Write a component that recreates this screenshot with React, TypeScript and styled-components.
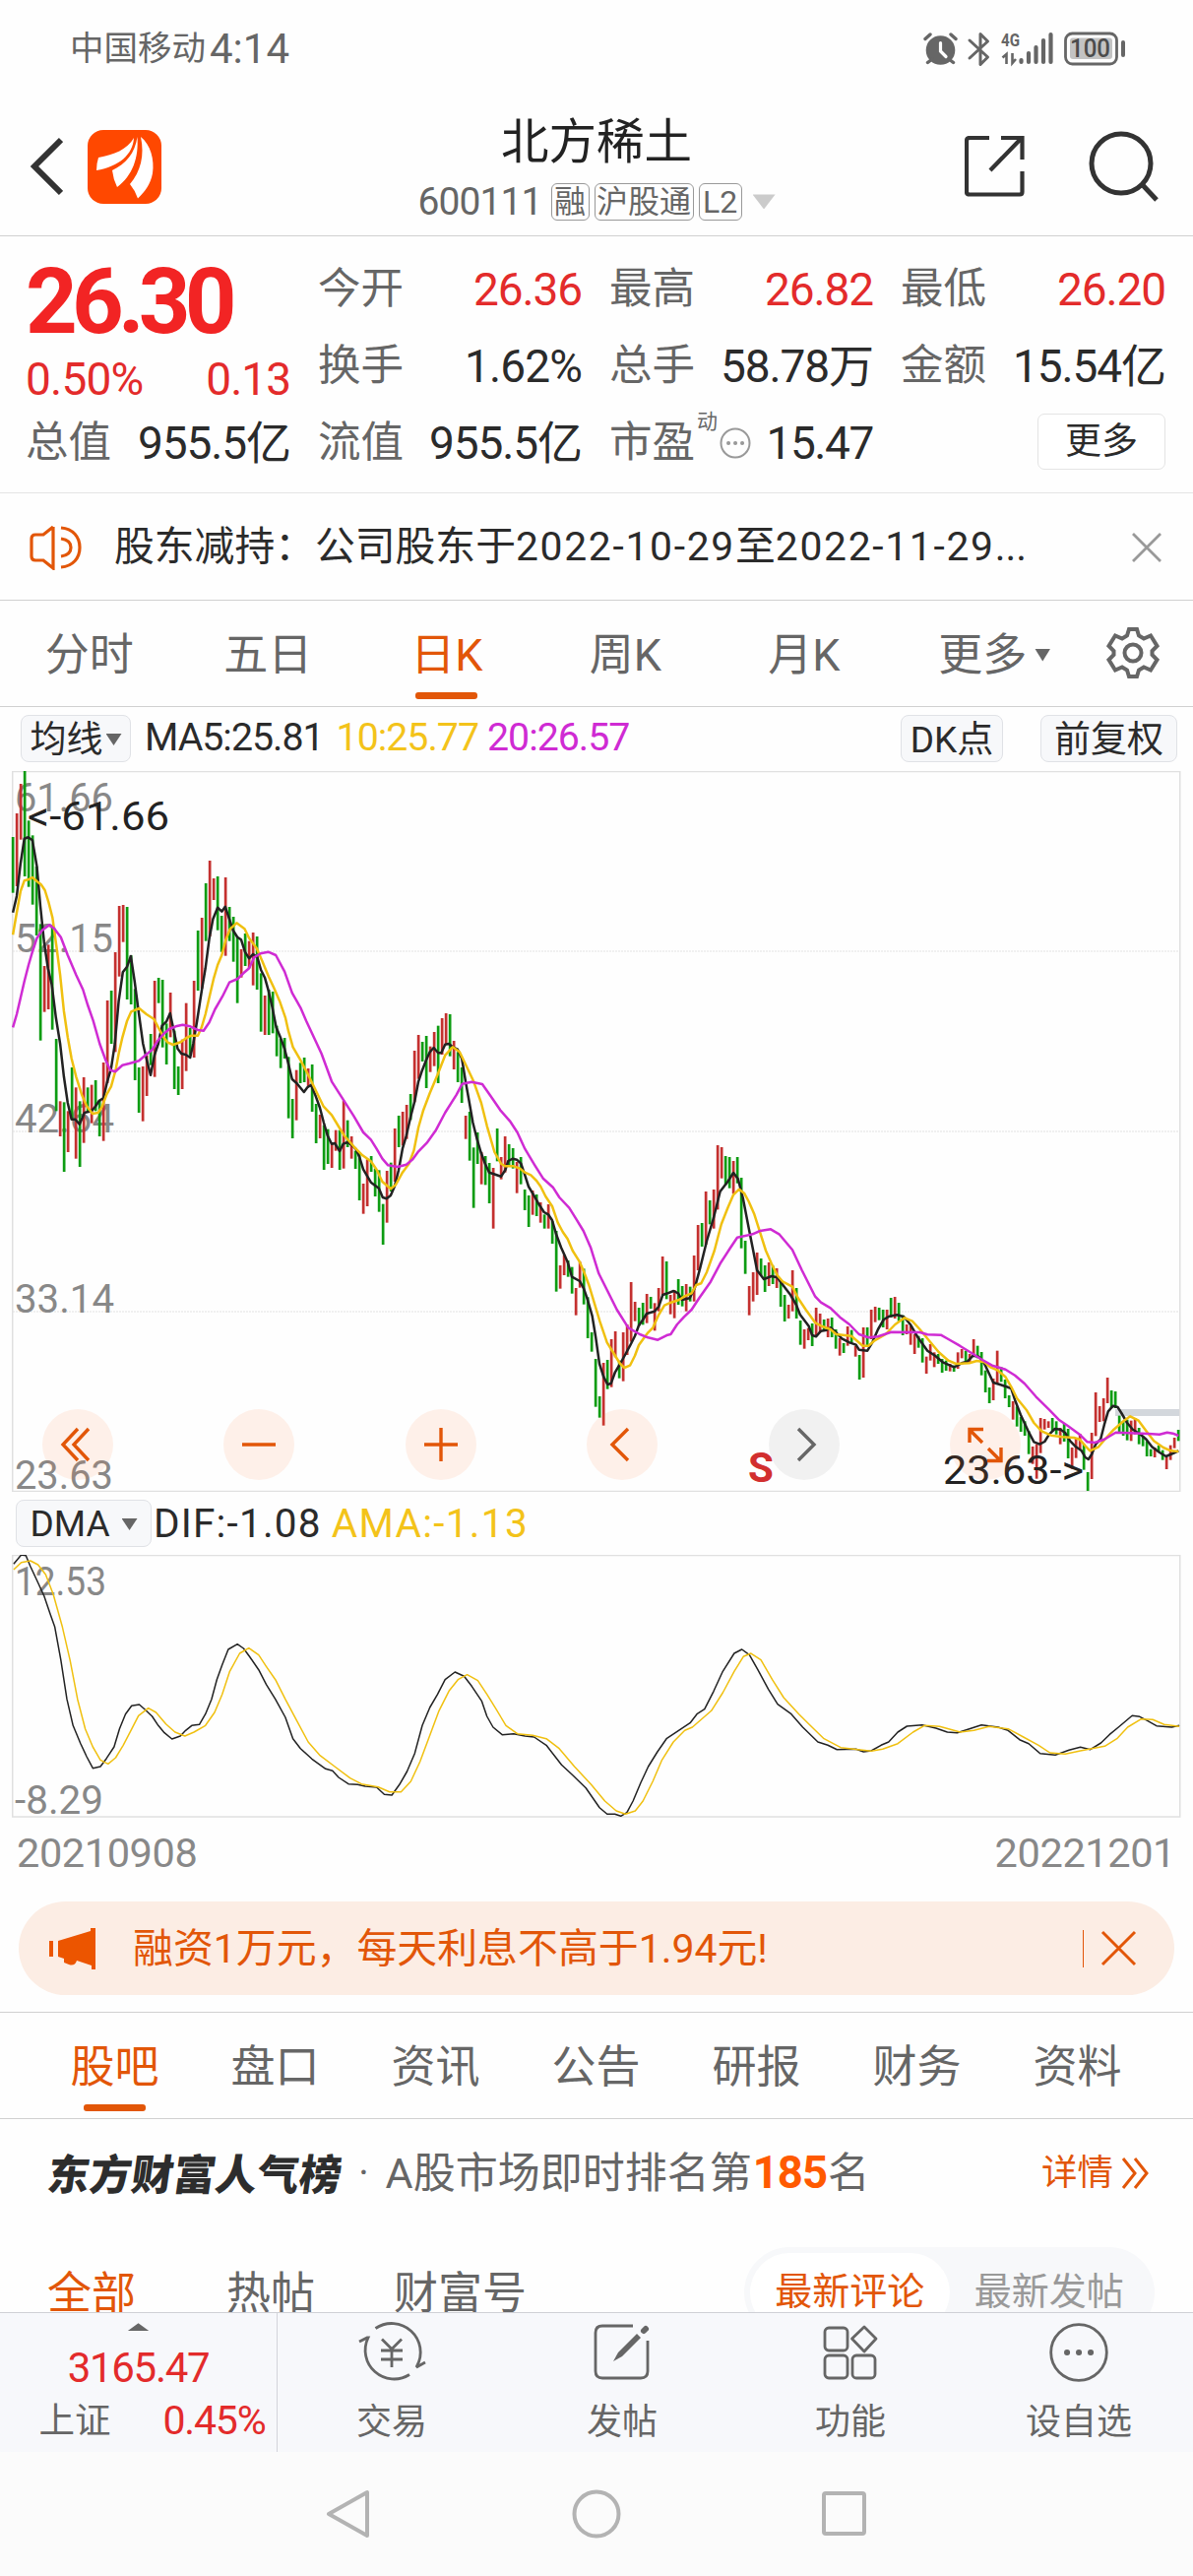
import React from "react";
import styled, { createGlobalStyle } from "styled-components";

const ORANGE = "#e25608";
const GRAY = "#666";
const DARK = "#2b2b2b";
const RED = "#e32b2b";
const FONT = 'Roboto, "Noto Sans CJK SC", sans-serif';

const GlobalStyle = createGlobalStyle`
  *, *::before, *::after { box-sizing: border-box; }
  body { margin: 0; background: #fff; font-family: ${FONT}; }
  svg { display: block; flex: none; }
`;

const Screen = styled.div`
  width: 1212px;
  height: 2616px;
  display: flex;
  flex-direction: column;
  overflow: hidden;
  background: #fefefe;
  white-space: nowrap;
  line-height: 1;
`;

/* ---------- generic text ---------- */
const Txt = styled.span<{ $s: number; $c?: string; $ls?: number; $w?: number; $ml?: number }>`
  font-size: ${(p) => p.$s}px;
  color: ${(p) => p.$c ?? GRAY};
  letter-spacing: ${(p) => p.$ls ?? 0}px;
  font-weight: ${(p) => p.$w ?? 400};
  margin-left: ${(p) => p.$ml ?? 0}px;
  line-height: 1.1;
`;

/* ---------- status bar ---------- */
const StatusBar = styled.div`
  height: 100px;
  padding: 0 68px 0 71px;
  display: flex;
  align-items: center;
  justify-content: space-between;
`;
const StatusGroup = styled.div`
  display: flex;
  align-items: center;
`;

/* ---------- header ---------- */
const Header = styled.div`
  height: 140px;
  border-bottom: 1px solid #d0d0d0;
  display: grid;
  grid-template-columns: 1fr auto 1fr;
  padding: 0 34px 0 30px;
`;
const HeaderSide = styled.div<{ $end?: boolean }>`
  display: flex;
  align-items: center;
  justify-content: ${(p) => (p.$end ? "flex-end" : "flex-start")};
  gap: ${(p) => (p.$end ? 64 : 25)}px;
`;
const TitleBlock = styled.div`
  display: flex;
  flex-direction: column;
  align-items: center;
  padding: 17px 0 0 4px;
`;
const TitleText = styled.h1`
  margin: 0;
  font-weight: 400;
  font-size: 48.5px;
  line-height: 56px;
  color: #222;
`;
const SubTitle = styled.div`
  display: flex;
  align-items: center;
  height: 38px;
  margin-top: 13px;
`;
const Tag = styled.span<{ $w: number; $ml: number }>`
  width: ${(p) => p.$w}px;
  height: 38px;
  margin-left: ${(p) => p.$ml}px;
  border: 1.5px solid #999;
  border-radius: 6px;
  font-size: 32px;
  line-height: 37px;
  display: flex;
  justify-content: center;
  color: ${GRAY};
`;
const Caret = styled.i<{ $w: number; $h: number; $c: string; $ml?: number; $up?: boolean }>`
  width: ${(p) => p.$w}px;
  height: ${(p) => p.$h}px;
  flex: none;
  margin-left: ${(p) => p.$ml ?? 0}px;
  background: ${(p) => p.$c};
  clip-path: ${(p) => (p.$up ? "polygon(50% 0, 100% 100%, 0 100%)" : "polygon(0 0, 100% 0, 50% 100%)")};
`;

/* ---------- quote ---------- */
const Quote = styled.div`
  height: 261px;
  padding: 15px 26px 0 26px;
  border-bottom: 1px solid #e4e4e4;
  display: grid;
  grid-template-columns: 269px 268px 268px 269px;
  column-gap: 28px;
  grid-auto-rows: 78.2px;
`;
const PriceCell = styled.div`
  grid-row: span 2;
  display: flex;
  flex-direction: column;
`;
const BigPrice = styled.div`
  height: 105px;
  line-height: 104px;
  font-size: 92px;
  font-weight: 700;
  letter-spacing: -5.8px;
  color: #f22424;
`;
const Cell = styled.div<{ $h?: number }>`
  height: ${(p) => p.$h ?? 78.2}px;
  display: flex;
  align-items: center;
  justify-content: space-between;
`;
const PeLabel = styled.span`
  display: flex;
  align-items: center;
`;
const Sup = styled.span`
  align-self: flex-start;
  margin: -8px 2px 0 2px;
  font-size: 21px;
  color: ${GRAY};
`;
const MoreButton = styled.button`
  width: 130px;
  height: 57px;
  margin: -3px 0 0 auto;
  padding: 0;
  border: 1.5px solid #e4e4e4;
  border-radius: 7px;
  background: #fff;
  font: 400 37px/51px ${FONT};
  color: ${DARK};
`;

/* ---------- notice ---------- */
const Notice = styled.div`
  height: 109px;
  padding: 2px 31px 0 30px;
  border-bottom: 1px solid #d0d0d0;
  display: flex;
  align-items: center;
`;
const NoticeText = styled.div`
  flex: 1;
  margin-left: 33px;
  font-size: 40.8px;
  color: ${DARK};
  line-height: 1.1;
`;
const DateRun = styled.span`
  letter-spacing: 1.7px;
`;

/* ---------- tab bars ---------- */
const TabBar = styled.div<{ $pl: number; $pr: number }>`
  height: 108px;
  padding: 0 ${(p) => p.$pr}px 0 ${(p) => p.$pl}px;
  border-bottom: 1px solid #d0d0d0;
  display: flex;
  align-items: stretch;
`;
const Tab = styled.div<{ $on?: boolean }>`
  flex: 1;
  position: relative;
  display: flex;
  align-items: center;
  justify-content: center;
  padding-top: 4px;
  font-size: 45px;
  color: ${(p) => (p.$on ? ORANGE : GRAY)};
  &::after {
    content: "";
    display: ${(p) => (p.$on ? "block" : "none")};
    position: absolute;
    bottom: 7px;
    left: 50%;
    width: 63px;
    height: 7px;
    margin-left: -31.5px;
    border-radius: 3px;
    background: ${ORANGE};
  }
`;
const GearSlot = styled.div`
  width: 123px;
  display: flex;
  align-items: center;
  justify-content: center;
`;

/* ---------- chart ---------- */
const LegendRow = styled.div<{ $pl: number }>`
  height: 65px;
  padding: 0 16px 0 ${(p) => p.$pl}px;
  display: flex;
  align-items: center;
`;
const Chip = styled.div<{ $w: number; $ml?: string }>`
  width: ${(p) => p.$w}px;
  height: 48px;
  margin-left: ${(p) => p.$ml ?? "0"};
  padding-top: 2px;
  border: 1.5px solid #e0e2e6;
  border-radius: 8px;
  background: #f7f8fa;
  display: flex;
  align-items: center;
  justify-content: center;
  font-size: 37px;
  color: ${DARK};
`;
const ChartBox = styled.div<{ $h: number }>`
  position: relative;
  height: ${(p) => p.$h}px;
`;
const ChartControls = styled.div`
  position: absolute;
  left: 43px;
  right: 175px;
  bottom: 12px;
  display: flex;
  justify-content: space-between;
`;
const RoundButton = styled.div<{ $gray?: boolean }>`
  width: 72px;
  height: 72px;
  border-radius: 50%;
  background: ${(p) => (p.$gray ? "rgba(0,0,0,.05)" : "rgba(255,115,45,.1)")};
`;
const DateRow = styled.div`
  height: 68px;
  padding: 2px 18px 0 17px;
  display: flex;
  align-items: center;
  justify-content: space-between;
`;

/* ---------- banner ---------- */
const BannerWrap = styled.div`
  height: 130px;
  padding: 17px 19px 0 19px;
  border-bottom: 1px solid #d0d0d0;
`;
const Banner = styled.div`
  height: 95px;
  border-radius: 48px;
  background: #fcede4;
  padding: 0 38px 0 31px;
  display: flex;
  align-items: center;
`;
const BannerText = styled.div`
  flex: 1;
  margin-left: 37px;
  padding-top: 2px;
  font-size: 40.9px;
  color: ${ORANGE};
`;
const Rule = styled.i`
  width: 1px;
  height: 38px;
  margin-right: 17px;
  background: ${ORANGE};
`;

/* ---------- rank and comments ---------- */
const RankRow = styled.div`
  height: 110px;
  padding: 0 41px 0 49px;
  display: flex;
  align-items: center;
`;
const RankLogo = styled.span`
  font-size: 42.6px;
  font-weight: 900;
  line-height: 50px;
  padding-top: 4px;
  transform: skewX(-8deg);
  color: #2d2d2d;
`;
const Spacer = styled.div`
  flex: 1;
`;
const CommentRow = styled.div`
  height: 86px;
  overflow: hidden;
  padding: 20px 39px 0 48px;
  display: flex;
  align-items: flex-start;
`;
const Filter = styled.div<{ $on?: boolean; $mr: number }>`
  margin: 22px ${(p) => p.$mr}px 0 0;
  font-size: 45px;
  line-height: 52px;
  color: ${(p) => (p.$on ? ORANGE : GRAY)};
`;
const Segment = styled.div`
  width: 417px;
  height: 92px;
  margin-left: auto;
  padding: 6px;
  border-radius: 46px;
  background: #f7f8fa;
  display: flex;
`;
const SegmentItem = styled.div<{ $on?: boolean }>`
  flex: 1;
  height: 80px;
  border-radius: 40px;
  background: ${(p) => (p.$on ? "#fff" : "transparent")};
  color: ${(p) => (p.$on ? ORANGE : "#999")};
  font-size: 38px;
  line-height: 78px;
  text-align: center;
`;

/* ---------- bottom ---------- */
const BottomBar = styled.div`
  height: 142px;
  border-top: 1px solid #cfd0d6;
  background: #f7f8fb;
  display: flex;
`;
const IndexBox = styled.div`
  width: 282px;
  border-right: 1px solid #d3d4da;
  display: flex;
  flex-direction: column;
  align-items: center;
  padding-top: 10px;
`;
const IndexValue = styled.div`
  margin-top: 15px;
  font-size: 42px;
  line-height: 46px;
  letter-spacing: -1.3px;
  color: ${RED};
`;
const IndexLine = styled.div`
  width: 230px;
  margin-top: 8px;
  margin-left: 28px;
  display: flex;
  align-items: center;
  justify-content: space-between;
`;
const Action = styled.div`
  flex: 1;
  display: flex;
  flex-direction: column;
  align-items: center;
  padding-top: 8px;
  font-size: 36px;
  color: ${GRAY};
  &:nth-child(2) { padding-right: 2px; }
`;
const ActionLabel = styled.span`
  margin-top: 18px;
  line-height: 42px;
`;
const SystemNav = styled.div`
  height: 126px;
  background: #fbfbfb;
  display: flex;
  justify-content: center;
  align-items: center;
  gap: 202px;
`;

/* ---------- chart data: high and low per session, 3 units per pixel ---------- */
const SESSIONS: { base: number; bars: string }[] = [
  {
    base: 770,
    bars:
      "g240-410 r168-390 r78-248 g38-360 g190-392 g235-446 g330-540 g505-860 r633-773 r568-765 g515-827 g855-1075 r1045-1152 g1048-1260 r1075-1200 g942-1100 r1003-1220 g1045-1245 r972-1172 g1003-1080 r995-1112 g981-1075 g1040-1152 r927-1166 r738-990 g708-870 r591-895 r450-665 r447-560 g453-735 g600-750 g703-981 g942-1080 r939-1106 r905-1029 g840-935 r678-971 g669-746 g675-881 g808-933 r714-850 g830-1008 g939-1026 r857-1008 r746-953 g822-905 r678-912 g525-708 r486-702 g381-557 r312-543 r366-432 g360-524 g480-590 r363-602 g453-557 g483-620 g545-746 r582-668 g534-633 r557-640 r531-692 g543-705 g655-833 r723-843 g705-843 g711-838 g815-908 g855-944 g852-915 g910-1097 g1038-1158 r950-1103 g928-990 g912-987 r945-1000 g933-1077 g1053-1173 r1086-1158 g1118-1254 g1130-1236 r1173-1248 r1133-1196 g1133-1254 r1043-1250 g1103-1185 r1152-1220 g1196-1251 g1200-1347 r1296-1388 r1222-1365 g1212-1260 g1250-1335 g1255-1382 g1358-1482 r1257-1415 g1232-1320 r1128-1290 g1089-1185 r1077-1180 r1056-1160 g1023-1102 r891-1048 r843-977 g864-924 g846-1005 r878-956 r834-938 g815-990 r792-903 r777-870 g780-908 r861-948 g895-987 g942-1050 r1089-1160 g1077-1226 g1186-1370 g1140-1236 r1200-1298 g1212-1300 g1233-1356",
  },
  {
    base: 1020,
    bars:
      "r498-683 g378-478 r465-533 r402-512 g426-490 g438-500 r480-575 g465-548 g564-627 g582-678 r567-641 g579-645 r603-665 g640-683 r609-683 g660-729 g690-875 r795-866 r763-825 g780-830 g800-881 r864-947 r784-863 g805-914 g892-1017 g999-1058 g1080-1226 g1194-1259 r1092-1283 g1083-1172 r1020-1166 r996-1075 g1085-1139 r999-1148 r975-1068 r846-1028 r906-965 g924-980 g909-976 r882-971 g891-927 r910-994 r864-935 r768-885 g783-898 r885-944 r870-956 g837-915 g858-920",
  },
  {
    base: 1100,
    bars:
      "r612-695 g620-665 r525-665 r432-570 g426-498 r330-492 g357-430 r324-443 r189-385 r195-290 g222-310 g225-320 r237-337 g225-305 g288-503 g480-581 r618-707 r576-665 r516-645 g534-585 g555-636 r546-618 g556-612 r564-624 g600-681 g645-726 r675-717 r570-695 g624-717 g723-797 r750-809 r746-783 g732-801 r684-770 r702-760 g720-755 r717-774 g714-774 g750-809 r777-830 g792-822 r741-800 g752-790 r800-833 g828-903 r744-897 g744-800 r690-780 r681-728 g684-722 g690-744 r690-750 g654-714 r651-717 g669-725 g707-768 r735-765 r740-797 r765-825 g770-806 g777-851 r833-885 r795-845 r820-865 g825-855 g840-882 g845-876 r855-878 g860-879 r820-870 r810-838 g815-850 r825-855 r780-830 g800-838 g819-890 g875-942 g927-975 r900-966 r815-915 g865-910 g903-960 g951-987 r969-1025 g985-1046 g1017-1062 g1030-1074 g1060-1130 r1107-1160 r1100-1205 r1020-1127 r1023-1055 r1030-1050 g1020-1060 g1030-1070 r1050-1100 g1038-1092 g1053-1143 r1110-1175 r1080-1142 r1068-1115 g1100-1178 g1185-1242 r1065-1206 r942-1075 r984-1032 r960-1030 r897-975 g936-990 g939-990 g1013-1063 g1030-1074 g1025-1088 r1028-1090 r1020-1070 g1050-1100 g1075-1106 g1090-1137 g1115-1137 r1110-1140 g1104-1125 g1118-1148 r1140-1176 r1103-1148 r1080-1112 g1056-1090",
  },
];

type Run = { x0: number; y0: number; kx: number; pts: string };
const K = 2.5875;

const MA5: Run[] = [
  { x0: 0, y0: 770, kx: K, pts: "34,470 44,420 54,320 64,245 74,241 85,250 97,330 106,450 116,560 126,640 136,690 147,790 158,870 168,970 178,1050 188,1100 198,1100 209,1115 222,1080 240,1075 250,1062 260,1045 272,1035 282,985 292,945 302,870 312,740 323,652 334,635 344,603 354,680 364,770 376,870 386,920 396,965 406,905 416,870 426,815 437,803 447,777 457,830 467,885 477,900 488,903 500,912 508,870 518,800 530,710 540,640 550,550 560,490 572,455 583,467 592,452 603,490 613,525 624,545 634,553 644,590 655,610 665,597 676,605 686,645 696,668 706,710 716,760 726,820 737,850 748,885 758,930 768,978 780,990 799,1017 808,1003 818,995 830,1030 841,1065 851,1110 861,1150 872,1175 880,1173 893,1197 902,1175 914,1170 924,1178 935,1190 945,1215 955,1253 975,1292 996,1310 1006,1338 1016,1342 1027,1332 1037,1305 1048,1255 1058,1190 1068,1150 1080,1090 1090,1045 1100,985 1110,950 1120,920 1130,895 1140,882 1152,898 1160,898 1170,872 1180,870 1190,880 1203,887 1214,915 1224,985 1234,1050 1243,1110 1254,1160 1264,1200 1275,1235" },
  { x0: 400, y0: 1020, kx: 3, pts: "291,512 305,517 327,524 340,505 349,477 363,470 375,473 388,485 398,515 411,555 423,575 440,605 458,633 471,640 483,658 495,700 510,740 530,785 543,830 567,843 579,865 591,900 605,950 615,1010 627,1095 640,1135 652,1158 662,1155 675,1120 690,1095 705,1068 720,1040 735,1010 747,978 760,960 771,942 795,935 808,920 820,885 835,880 853,873 867,880 874,893" },
  { x0: 606, y0: 1100, kx: K, pts: "225,660 245,655 258,625 272,565 290,480 308,410 325,330 345,300 360,273 372,292 385,350 400,440 412,510 422,570 440,597 460,588 475,592 490,615 510,645 525,675 535,705 558,740 567,768 577,772 590,755 605,752 615,745 630,760 645,778 665,790 682,797 690,812 712,815 725,790 740,750 755,720 770,710 790,706 808,712 825,735 845,775 870,815 890,830 910,850 940,865 960,853 975,848 990,830 1005,833 1020,855 1043,912 1060,918 1078,925 1090,930 1100,965 1115,1010 1135,1060 1150,1093 1165,1100 1178,1092 1190,1070 1205,1053 1220,1055 1232,1065 1245,1090 1260,1108 1275,1120 1285,1140 1293,1146 1302,1130 1312,1100 1325,1085 1335,1040 1345,1000 1358,983 1370,987 1380,1005 1395,1035 1410,1055 1430,1070 1445,1085 1460,1108 1480,1125 1497,1137 1515,1128 1530,1120" },
];
const MA10: Run[] = [
  { x0: 0, y0: 770, kx: K, pts: "34,538 44,470 54,405 64,373 74,370 85,363 97,375 108,385 118,402 128,440 138,485 148,570 158,660 168,770 178,850 188,915 200,970 215,1025 228,1060 243,1083 258,1080 268,1062 280,1025 292,1000 304,950 312,900 322,850 334,800 345,772 366,762 385,780 405,795 416,820 430,850 440,865 455,873 475,865 490,852 503,845 520,845 530,820 540,780 552,720 562,670 572,630 583,600 593,555 605,520 622,502 643,520 655,548 675,580 690,620 706,665 720,700 735,740 750,790 758,830 770,880 790,920 808,960 825,1000 850,1060 872,1087 890,1122 905,1150 930,1183 953,1210 975,1228 990,1253 1005,1290 1027,1312 1040,1300 1058,1262 1075,1235 1088,1195 1100,1125 1112,1075 1130,1020 1150,965 1170,905 1190,880 1208,895 1225,935 1245,985 1265,1050 1280,1120 1300,1200" },
  { x0: 400, y0: 1020, kx: 3, pts: "327,485 339,493 365,493 385,500 400,512 418,520 435,537 448,555 463,585 483,615 500,665 515,693 530,715 545,750 567,785 580,815 595,855 610,905 628,965 650,1030 670,1062 690,1095 703,1107 720,1100 735,1070 747,1038 760,1020 775,1000 790,985 808,945 825,917 845,908 870,900" },
  { x0: 606, y0: 1100, kx: K, pts: "230,650 250,640 262,615 275,610 290,575 310,510 328,430 345,380 360,340 375,323 388,335 400,360 415,400 430,455 445,510 460,550 475,585 490,605 515,620 530,655 550,690 575,730 595,742 615,750 630,765 670,770 685,785 700,800 715,800 730,785 760,765 785,735 810,715 830,725 850,750 875,785 900,820 925,845 945,855 980,853 1000,846 1020,850 1035,865 1055,875 1075,895 1090,925 1105,960 1130,995 1150,1035 1170,1060 1195,1073 1225,1078 1255,1080 1270,1085 1285,1105 1297,1120 1320,1108 1340,1080 1360,1055 1385,1030 1403,1015 1425,1028 1445,1060 1465,1090 1490,1110 1510,1120 1530,1122" },
];
const MA20: Run[] = [
  { x0: 0, y0: 770, kx: K, pts: "34,820 44,780 54,730 64,680 75,630 85,590 97,548 110,525 130,508 143,520 160,545 178,600 200,660 218,705 230,750 245,800 262,870 278,920 290,950 303,955 322,935 340,930 365,922 382,905 400,888 415,860 430,840 445,825 462,817 480,812 500,817 520,828 535,830 550,805 565,765 585,725 603,683 625,672 640,655 655,640 668,607 685,595 705,590 725,600 748,650 768,715 790,760 805,800 825,850 845,900 872,985 905,1045 930,1090 955,1140 975,1162 990,1190 1005,1220 1020,1240 1045,1245 1068,1238 1085,1222 1100,1198 1122,1172 1145,1135 1170,1080 1200,1025 1215,992 1240,986 1268,993 1290,1030 1315,1072 1340,1105 1360,1140 1380,1190" },
  { x0: 400, y0: 1020, kx: 3, pts: "412,460 430,490 455,530 485,557 505,588 535,620 555,652 578,690 600,740 625,820 650,870 680,930 715,985 750,1005 775,1015 805,1022 835,1007" },
  { x0: 606, y0: 1100, kx: K, pts: "195,765 212,735 230,712 250,690 270,655 300,605 325,550 350,505 370,470 410,460 430,450 458,445 480,460 515,508 540,570 575,650 590,668 615,685 640,713 665,735 690,765 715,775 740,772 775,758 850,759 870,766 905,767 925,780 955,800 990,825 1010,840 1040,860 1075,872 1100,890 1125,915 1155,955 1190,995 1215,1025 1240,1045 1270,1070 1290,1093 1310,1095 1335,1085 1365,1064 1400,1066 1450,1068 1480,1070 1500,1064 1515,1067 1530,1074" },
];
const DIF: Run[] = [
  { x0: 0, y0: 1540, kx: 1.2937, pts: "18,148 28,120 34,122 40,155 48,195 58,245 66,300 72,340 80,440 88,560 96,640 106,695 114,735 122,770 132,765 140,740 150,705 157,650 165,605 173,580 183,576 190,590 200,612 208,640 216,662 226,681 237,672 244,655 252,640 262,637 270,605 278,560 285,500 292,455 300,408 312,392 320,405 328,430 340,470 350,515 362,560 375,615 385,680 395,710 410,742 428,772 437,778 445,798 458,818 470,820 480,825 495,828 505,850 515,852 525,820 535,780 545,725 555,640 565,585 575,545 585,500 598,477 610,490 620,520 633,565 640,612 648,645 660,668 675,665 690,672 702,675 718,700 738,760 752,790 770,830 788,890 798,910 808,910 816,916 824,905 832,870 842,815 852,765 864,720 876,680 892,655 907,632 916,605 926,590 938,535 950,475 965,420 975,408 985,425 996,470 1010,530 1022,575 1040,605 1055,645 1075,690 1088,700 1100,713 1125,712 1135,720 1145,717 1158,700 1168,690 1180,660 1192,642 1212,638 1230,648 1245,660 1258,662 1270,653 1290,638 1312,645 1325,655 1340,683 1352,695 1367,725 1387,730 1405,715 1420,706 1433,713 1447,693 1458,668 1470,645 1488,610 1498,613 1508,625 1520,641 1540,645 1550,640" },
];
const AMA: Run[] = [
  { x0: 0, y0: 1540, kx: 1.2937, pts: "18,165 28,143 40,138 50,150 60,180 70,240 82,340 92,440 102,560 112,650 122,705 132,745 142,757 152,738 162,700 172,655 182,610 195,587 205,600 218,635 230,660 243,672 255,660 270,640 282,600 292,545 302,475 315,420 327,404 340,425 350,460 362,500 375,560 390,625 405,690 420,730 440,765 460,800 475,818 497,827 512,842 527,842 540,810 552,750 565,670 577,595 590,535 602,500 614,485 628,503 640,545 652,590 665,640 680,665 700,670 718,680 735,710 755,765 777,820 795,870 810,900 822,910 835,900 845,870 858,810 870,745 885,690 900,655 910,645 935,595 950,540 965,475 977,430 987,420 1000,440 1015,500 1030,555 1050,605 1065,640 1083,680 1105,707 1145,718 1160,712 1180,695 1200,660 1215,640 1235,643 1262,660 1280,655 1300,643 1325,650 1345,675 1365,700 1380,723 1400,727 1420,717 1435,710 1452,703 1468,680 1482,645 1500,620 1515,622 1530,637 1550,643" },
];

const toPoints = (runs: Run[]) =>
  runs
    .flatMap((r) =>
      r.pts.split(" ").map((p) => {
        const [x, y] = p.split(",").map(Number);
        return `${(r.x0 + x / r.kx).toFixed(1)},${(r.y0 + y / 3).toFixed(1)}`;
      })
    )
    .join(" ");

const CANDLES = SESSIONS.flatMap(({ base, bars }) =>
  bars.split(" ").map((b) => {
    const [hi, lo] = b.slice(1).split("-").map(Number);
    return { up: b[0] === "r", hi: base + hi / 3, lo: base + lo / 3 };
  })
);

const AxisText = ({ x, y, w, fill = "#888", children }: { x: number; y: number; w: number; fill?: string; children: string }) => (
  <text x={x} y={y} textLength={w} lengthAdjust="spacingAndGlyphs" fontSize="41.5" fill={fill} fontFamily="Roboto">
    {children}
  </text>
);

const Trend = ({ runs, color, w }: { runs: Run[]; color: string; w: number }) => (
  <polyline points={toPoints(runs)} fill="none" stroke={color} strokeWidth={w} strokeLinejoin="round" />
);

const CandleChart = () => (
  <svg width="1212" height="732" viewBox="0 783 1212 732">
    <g stroke="#ececec" strokeWidth="1.6" strokeDasharray="2 1">
      <path d="M13 966H1198M13 1149H1198M13 1332H1198" />
    </g>
    <rect x="1133" y="1431" width="66" height="7" fill="#d3d7dc" />
    <rect x="12.75" y="783.500" width="1186" height="731" fill="none" stroke="#e0e0e0" strokeWidth="1.5" />
    <AxisText x={15} y={824} w={100}>61.66</AxisText>
    <AxisText x={15} y={967} w={100}>52.15</AxisText>
    <AxisText x={15} y={1150} w={101}>42.64</AxisText>
    <AxisText x={15} y={1333} w={101}>33.14</AxisText>
    <AxisText x={15} y={1512} w={100}>23.63</AxisText>
    {CANDLES.map((c, i) => (
      <rect key={i} x={11.8 + i * 4} y={c.hi} width={2.7} height={c.lo - c.hi} fill={c.up ? "#c4302f" : "#0d9c12"} />
    ))}
    <Trend runs={MA5} color="#222" w={2.5} />
    <Trend runs={MA10} color="#f0c010" w={2.5} />
    <Trend runs={MA20} color="#cf2bd3" w={2.5} />
    <AxisText x={28} y={843} w={144} fill="#222">&lt;-61.66</AxisText>
    <AxisText x={958} y={1507} w={143} fill="#222">23.63-&gt;</AxisText>
    <text x="760" y="1505" fontSize="42" fontWeight="700" fontFamily="Roboto" fill="#d22f2f">S</text>
  </svg>
);

const DmaChart = () => (
  <svg width="1212" height="267" viewBox="0 1580 1212 267">
    <rect x="12.75" y="1580.500" width="1186" height="265.500" fill="none" stroke="#e0e0e0" strokeWidth="1.5" />
    <AxisText x={15} y={1621} w={93}>12.53</AxisText>
    <AxisText x={15} y={1843} w={90}>-8.29</AxisText>
    <Trend runs={DIF} color="#222" w={1.5} />
    <Trend runs={AMA} color="#f0c010" w={1.5} />
  </svg>
);

const CONTROLS = [
  { d: "M36 20L21 36L36 52M47 20L32 36L47 52" },
  { d: "M19 36H53" },
  { d: "M19 36H53M36 19V53" },
  { d: "M42 20L26 36L42 52" },
  { d: "M30 20L46 36L30 52", gray: true },
  { d: "M33 34L20 21M20 34V20.500H34M39 40L52 53M52 39V52.500H38" },
];

/* ---------- icons ---------- */
const Line = styled.svg<{ $c?: string; $w?: number }>`
  fill: none;
  stroke: ${(p) => p.$c ?? GRAY};
  stroke-width: ${(p) => p.$w ?? 2.6};
`;

const StatusIcons = () => (
  <svg width="206" height="38" viewBox="938 31 206 38" fill="none" stroke="#666">
    <circle cx="955.500" cy="51" r="14.800" fill="#666" stroke="none" />
    <path d="M955.500 43.500V52L961 57.500" stroke="#fff" strokeWidth="3.200" strokeLinecap="round" />
    <path d="M940 39.500L945 35M971 39.500L966 35M942.500 63.500L947 60M968.500 63.500L964 60" strokeWidth="3.400" strokeLinecap="round" />
    <path d="M985 41L1003.500 58L996 65.500V34.500L1003.500 42L985 59" strokeWidth="3" strokeLinecap="round" strokeLinejoin="round" />
    <text x="1017" y="46.500" fontSize="19" fontWeight="700" fontFamily="Roboto" fill="#666" stroke="none" textLength="19" lengthAdjust="spacingAndGlyphs">4G</text>
    <path d="M1018.500 58.500L1022.500 55V65M1028.500 54V64L1032 60" strokeWidth="2.600" />
    <path d="M1037.500 61V63M1045 54V63M1052.500 48V63M1060 41V63M1067.500 35V63" strokeWidth="4.200" strokeLinecap="round" />
    <rect x="1082.500" y="34" width="52" height="31" rx="7" strokeWidth="2.800" />
    <rect x="1087" y="38.500" width="43" height="21.500" rx="3" fill="#c3c3c3" stroke="none" />
    <text x="1087" y="58" fontSize="25.500" fontWeight="500" fontFamily="Roboto" fill="#4c4c4c" stroke="none" textLength="41" lengthAdjust="spacingAndGlyphs">100</text>
    <path d="M1141 43V56" strokeWidth="4" strokeLinecap="round" />
  </svg>
);

const BrandLogo = () => (
  <svg width="75" height="75" viewBox="0 0 75 75">
    <rect width="75" height="75" rx="16" fill="#ff4800" />
    <path fill="#fff" d="M47 8C46 25 32 37 9 41Q9 34 11 28C27 25 40 20 47 8ZM50.500 7C52 28 46 46 30 58Q26 50 25 41C39 34 48 24 50.500 7ZM54 7C64 15 68 30 66 44C64 55 58 63 51 69.500Q48 61 43 55C54 42 58 26 54 7Z" />
  </svg>
);

const Gear = () => (
  <Line width="56" height="56" viewBox="0 0 56 56" $w={4} strokeLinejoin="miter">
    <path d="M24 4H32L34 10.500L39 13.500L46 10.500L52.500 21L47.500 26V30L52.500 35L46 45.500L39 42.500L34 45.500L32 52H24L22 45.500L17 42.500L10 45.500L3.500 35L8.500 30V26L3.500 21L10 10.500L17 13.500L22 10.500Z" />
    <circle cx="28" cy="28" r="8.500" />
  </Line>
);

const Cross = ({ size, color, w }: { size: number; color: string; w: number }) => (
  <Line width={size} height={size} viewBox={`0 0 ${size} ${size}`} $c={color} $w={w}>
    <path d={`M2 2L${size - 2} ${size - 2}M${size - 2} 2L2 ${size - 2}`} />
  </Line>
);

const ACTIONS = [
  {
    label: "交易",
    icon: (
      <Line width="70" height="64" viewBox="0 0 70 64" $w={2.8}>
        <path d="M18.500 7.500A29.300 29.300 0 0 1 60.500 46L61 46.500L69 42M53 54.500A29.300 29.300 0 0 1 11 17L10 17L2 21" />
        <path d="M25 18.500L35 28.500L45 18.500M35 28V47M24 30H46M24 39H46" />
      </Line>
    ),
  },
  {
    label: "发帖",
    icon: (
      <Line width="64" height="64" viewBox="0 0 64 64" $w={2.8}>
        <path d="M43 5H12Q5 5 5 12V51Q5 58 12 58H51Q58 58 58 51V20" />
        <path d="M23 41L28 32L47 13L51 17L32 36Z" fill={GRAY} stroke="none" />
        <path d="M54 10L56 8" strokeWidth="6" strokeLinecap="round" />
      </Line>
    ),
  },
  {
    label: "功能",
    icon: (
      <Line width="64" height="64" viewBox="0 0 64 64" $w={2.8}>
        <rect x="6" y="7" width="23" height="23" rx="4" />
        <rect x="6" y="35" width="23" height="23" rx="4" />
        <rect x="34" y="35" width="23" height="23" rx="4" />
        <path d="M46 6L58 18L46 31L33.500 18Z" strokeLinejoin="round" />
      </Line>
    ),
  },
  {
    label: "设自选",
    icon: (
      <Line width="64" height="64" viewBox="0 0 64 64" $w={2.8}>
        <circle cx="32" cy="32" r="28.300" />
        <path d="M20 32h.1M32 32h.1M44 32h.1" strokeWidth="6" strokeLinecap="round" />
      </Line>
    ),
  },
];

const QuoteItem = ({ k, v, c = DARK, ls = -1.1 }: { k: string; v: string; c?: string; ls?: number }) => (
  <Cell>
    <Txt $s={43.5}>{k}</Txt>
    <Txt $s={46} $c={c} $ls={ls}>{v}</Txt>
  </Cell>
);

export default function App() {
  return (
    <Screen>
      <GlobalStyle />
      <StatusBar>
        <StatusGroup>
          <Txt $s={34.5}>中国移动</Txt>
          <Txt $s={42} $ml={4}>4:14</Txt>
        </StatusGroup>
        <StatusIcons />
      </StatusBar>

      <Header>
        <HeaderSide>
          <Line width="34" height="60" viewBox="0 0 34 60" $c="#333" $w={6}>
            <path d="M32 3L5 30L32 57" />
          </Line>
          <BrandLogo />
        </HeaderSide>
        <TitleBlock>
          <TitleText>北方稀土</TitleText>
          <SubTitle>
            <Txt $s={39} $ls={-0.9}>600111</Txt>
            <Tag $w={39} $ml={9}>融</Tag>
            <Tag $w={101} $ml={5}>沪股通</Tag>
            <Tag $w={44} $ml={5}>L2</Tag>
            <Caret $w={23} $h={15} $c="#cbcbcb" $ml={11} />
          </SubTitle>
        </TitleBlock>
        <HeaderSide $end>
          <Line width="62" height="62" viewBox="0 0 62 62" $c="#333" $w={4.2}>
            <path d="M25 2H5Q2 2 2 5V57Q2 59.500 5 59.500H56Q58.500 59.500 58.500 57V36M37 2H58.500V24M58 2L26 35" />
          </Line>
          <Line width="72" height="72" viewBox="0 0 72 72" $c="#333" $w={5}>
            <circle cx="33" cy="33" r="30" />
            <path d="M54 54L69 70" />
          </Line>
        </HeaderSide>
      </Header>

      <Quote>
        <PriceCell>
          <BigPrice>26.30</BigPrice>
          <Cell $h={51}>
            <Txt $s={46} $c={RED} $ls={-0.8}>0.50%</Txt>
            <Txt $s={46} $c={RED} $ls={-1}>0.13</Txt>
          </Cell>
        </PriceCell>
        <QuoteItem k="今开" v="26.36" c={RED} />
        <QuoteItem k="最高" v="26.82" c={RED} />
        <QuoteItem k="最低" v="26.20" c={RED} />
        <QuoteItem k="换手" v="1.62%" ls={-0.9} />
        <QuoteItem k="总手" v="58.78万" />
        <QuoteItem k="金额" v="15.54亿" />
        <QuoteItem k="总值" v="955.5亿" />
        <QuoteItem k="流值" v="955.5亿" />
        <Cell>
          <PeLabel>
            <Txt $s={43.5}>市盈</Txt>
            <Sup>动</Sup>
            <Line width="32" height="32" viewBox="0 0 32 32" $c="#999" $w={2}>
              <circle cx="16" cy="16" r="14.500" />
              <path d="M9 16h.1M16 16h.1M23 16h.1" strokeWidth="4" strokeLinecap="round" />
            </Line>
          </PeLabel>
          <Txt $s={46} $c={DARK} $ls={-1.4}>15.47</Txt>
        </Cell>
        <Cell>
          <MoreButton>更多</MoreButton>
        </Cell>
      </Quote>

      <Notice>
        <Line width="53" height="46" viewBox="0 0 53 46" $c={ORANGE} $w={3.2}>
          <path d="M24 2V44L14 36H6Q2 36 2 32V14Q2 10 6 10H14L24 2M32 3C44 4 51 12 51 23S44 42 32 43M32 14C39 15 42 18 42 23S39 31 32 32" />
        </Line>
        <NoticeText>
          股东减持：公司股东于<DateRun>2022-10-29</DateRun>至<DateRun>2022-11-29</DateRun>...
        </NoticeText>
        <Cross size={32} color="#999" w={2.8} />
      </Notice>

      <TabBar $pl={0} $pr={0}>
        <Tab>分时</Tab>
        <Tab>五日</Tab>
        <Tab $on>日K</Tab>
        <Tab>周K</Tab>
        <Tab>月K</Tab>
        <Tab>
          <Caret as="span" $w={0} $h={14} $c="transparent" $ml={24} />
          更多
          <Caret $w={16} $h={13} $c={GRAY} $ml={8} />
        </Tab>
        <GearSlot>
          <Gear />
        </GearSlot>
      </TabBar>

      <LegendRow $pl={21}>
        <Chip $w={112}>
          均线
          <Caret $w={16} $h={12} $c={GRAY} $ml={3} />
        </Chip>
        <Txt $s={39.3} $c={DARK} $ml={14} $ls={-1}>MA5:25.81</Txt>
        <Txt $s={39.3} $c="#f3c31a" $ml={13} $ls={-1}>10:25.77</Txt>
        <Txt $s={39.3} $c="#cf2bd3" $ml={9} $ls={-1}>20:26.57</Txt>
        <Chip $w={104} $ml="auto">DK点</Chip>
        <Chip $w={139} $ml="38px">前复权</Chip>
      </LegendRow>

      <ChartBox $h={732}>
        <CandleChart />
        <ChartControls>
          {CONTROLS.map((c, i) => (
            <RoundButton key={i} $gray={c.gray}>
              <Line width="72" height="72" viewBox="0 0 72 72" $c={c.gray ? GRAY : ORANGE} $w={3.4}>
                <path d={c.d} />
              </Line>
            </RoundButton>
          ))}
        </ChartControls>
      </ChartBox>

      <LegendRow $pl={16}>
        <Chip $w={138}>
          DMA
          <Caret $w={16} $h={12} $c={GRAY} $ml={12} />
        </Chip>
        <Txt $s={40.5} $c={DARK} $ml={2} $ls={1.2}>DIF:-1.08</Txt>
        <Txt $s={40.5} $c="#f3c31a" $ml={10} $ls={1.3}>AMA:-1.13</Txt>
      </LegendRow>
      <ChartBox $h={267}>
        <DmaChart />
      </ChartBox>
      <DateRow>
        <Txt $s={41.5} $c="#888" $ls={-0.4}>20210908</Txt>
        <Txt $s={41.5} $c="#888" $ls={-0.4}>20221201</Txt>
      </DateRow>

      <BannerWrap>
        <Banner>
          <svg width="48" height="42" viewBox="0 0 48 42" fill="#ec5500">
            <path d="M0 13H4V29H0ZM9 13L42 3V0H47V42H43V38L28 33Q26 39 20 37L15 35V31L9 29Z" />
          </svg>
          <BannerText>融资1万元，每天利息不高于1.94元!</BannerText>
          <Rule />
          <Cross size={37} color={ORANGE} w={3} />
        </Banner>
      </BannerWrap>

      <TabBar $pl={35} $pr={36}>
        <Tab $on>股吧</Tab>
        <Tab>盘口</Tab>
        <Tab>资讯</Tab>
        <Tab>公告</Tab>
        <Tab>研报</Tab>
        <Tab>财务</Tab>
        <Tab>资料</Tab>
      </TabBar>

      <RankRow>
        <RankLogo>东方财富人气榜</RankLogo>
        <Txt $s={40} $ml={17}>·</Txt>
        <Txt $s={43} $ml={17}>A股市场即时排名第</Txt>
        <Txt $s={45.5} $c="#ff5a00" $w={700} $ls={-1} $ml={1}>185</Txt>
        <Txt $s={42.5} $ml={1}>名</Txt>
        <Spacer />
        <Txt $s={36.5} $c={ORANGE}>详情</Txt>
        <Line width="40" height="32" viewBox="0 0 40 32" $c={ORANGE} $w={3}>
          <path d="M10 1L22 16L10 31M22 1L34 16L22 31" />
        </Line>
      </RankRow>

      <CommentRow>
        <Filter $on $mr={92}>全部</Filter>
        <Filter $mr={80}>热帖</Filter>
        <Filter $mr={0}>财富号</Filter>
        <Segment>
          <SegmentItem $on>最新评论</SegmentItem>
          <SegmentItem>最新发帖</SegmentItem>
        </Segment>
      </CommentRow>

      <BottomBar>
        <IndexBox>
          <Caret $w={22} $h={8} $c={GRAY} $up />
          <IndexValue>3165.47</IndexValue>
          <IndexLine>
            <Txt $s={36.5}>上证</Txt>
            <Txt $s={41} $c={RED} $ls={-1.2}>0.45%</Txt>
          </IndexLine>
        </IndexBox>
        {ACTIONS.map((a) => (
          <Action key={a.label}>
            {a.icon}
            <ActionLabel>{a.label}</ActionLabel>
          </Action>
        ))}
      </BottomBar>

      <SystemNav>
        <Line width="50" height="52" viewBox="0 0 50 52" $c="#b3b3b3" $w={4}>
          <path d="M44 4V48L5 26Z" strokeLinejoin="round" />
        </Line>
        <Line width="50" height="50" viewBox="0 0 50 50" $c="#b3b3b3" $w={4}>
          <circle cx="25" cy="25" r="22.500" />
        </Line>
        <Line width="50" height="50" viewBox="0 0 50 50" $c="#b3b3b3" $w={4}>
          <rect x="4" y="4" width="41" height="41" rx="2" />
        </Line>
      </SystemNav>
    </Screen>
  );
}
